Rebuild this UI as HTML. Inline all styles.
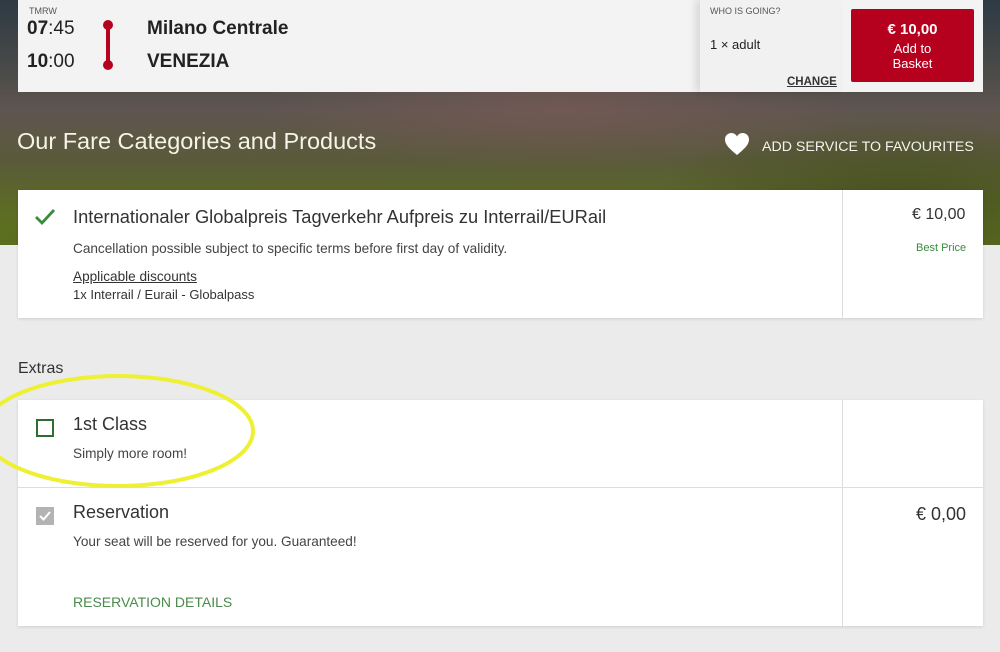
<!DOCTYPE html>
<html><head><meta charset="utf-8"><style>
*{margin:0;padding:0;box-sizing:border-box}
body{width:1000px;height:652px;overflow:hidden;background:#ebebeb;font-family:"Liberation Sans",sans-serif;position:relative;color:#333}
.hero{position:absolute;left:0;top:0;width:1000px;height:245px;background:
radial-gradient(ellipse 300px 60px at 560px 110px,rgba(120,90,85,.7),transparent),
radial-gradient(ellipse 250px 80px at 900px 200px,rgba(70,80,30,.9),transparent),
linear-gradient(180deg,#2e3a44 0px,#4a4a48 70px,#5f5550 110px,#5a5a3a 160px,#5d6e22 215px,#5c6d1f 245px)}
.a{position:absolute;white-space:nowrap}
.card{background:#f3f3f3}
</style></head><body>
<div class="hero"></div>
<div class="a card" style="left:18px;top:0;width:965px;height:92px"></div>
<div class="a" style="left:29px;top:6px;font-size:9px;color:#555">TMRW</div>
<div class="a" style="left:27px;top:18px;font-size:19px;color:#222"><b>07</b>:45</div>
<div class="a" style="left:27px;top:51px;font-size:19px;color:#222"><b>10</b>:00</div>
<div class="a" style="left:103px;top:20px;width:10px;height:10px;border-radius:50%;background:#b5001e"></div>
<div class="a" style="left:106px;top:25px;width:4px;height:38px;background:#b5001e"></div>
<div class="a" style="left:103px;top:60px;width:10px;height:10px;border-radius:50%;background:#b5001e"></div>
<div class="a" style="left:147px;top:18px;font-size:19px;font-weight:bold;color:#222">Milano Centrale</div>
<div class="a" style="left:147px;top:51px;font-size:19px;font-weight:bold;color:#222">VENEZIA</div>
<div class="a" style="left:700px;top:0;width:140px;height:92px;background:#f1f1f1;box-shadow:-4px 0 8px rgba(0,0,0,.12)"></div>
<div class="a" style="left:710px;top:6px;font-size:9px;color:#555">WHO IS GOING?</div>
<div class="a" style="left:710px;top:37px;font-size:13px;color:#222">1 × adult</div>
<div class="a" style="left:787px;top:76px;font-size:11.5px;font-weight:bold;color:#333;text-decoration:underline">CHANGE</div>
<div class="a" style="left:851px;top:9px;width:123px;height:73px;background:#b5001e;border-radius:2px;color:#fff;text-align:center">
<div style="font-size:15px;font-weight:bold;margin-top:12px">€ 10,00</div>
<div style="font-size:13px;line-height:15px;margin-top:3px">Add to<br>Basket</div></div>
<div class="a" style="left:17px;top:128px;font-size:23.5px;color:#f4f4e8">Our Fare Categories and Products</div>
<svg class="a" style="left:724px;top:132px" width="26" height="24" viewBox="0 0 26 24"><path d="M13 23 C6 17 1 13 1 7.5 C1 3.5 4 1 7.5 1 C10 1 12 2.5 13 4.5 C14 2.5 16 1 18.5 1 C22 1 25 3.5 25 7.5 C25 13 20 17 13 23Z" fill="#fff"/></svg>
<div class="a" style="left:762px;top:139px;font-size:14.2px;color:#f4f4f0">ADD SERVICE TO FAVOURITES</div>
<div class="a" style="left:18px;top:190px;width:965px;height:128px;background:#fff;box-shadow:0 1px 3px rgba(0,0,0,.12)"></div>
<div class="a" style="left:842px;top:190px;width:1px;height:128px;background:#ddd"></div>
<svg class="a" style="left:34px;top:208px" width="22" height="18"><path d="M2 9 L8 15 L20 2" stroke="#3c8a3c" stroke-width="2.8" fill="none"/></svg>
<div class="a" style="left:73px;top:206px;font-size:18.3px;color:#333">Internationaler Globalpreis Tagverkehr Aufpreis zu Interrail/EURail</div>
<div class="a" style="left:73px;top:241px;font-size:13.6px;color:#444">Cancellation possible subject to specific terms before first day of validity.</div>
<div class="a" style="left:73px;top:269px;font-size:13.6px;color:#333;text-decoration:underline">Applicable discounts</div>
<div class="a" style="left:73px;top:287px;font-size:13px;color:#333">1x Interrail / Eurail - Globalpass</div>
<div class="a" style="left:912px;top:206px;font-size:16px;color:#333">€ 10,00</div>
<div class="a" style="left:916px;top:242px;font-size:11px;color:#3c8a3c">Best Price</div>
<div class="a" style="left:18px;top:360px;font-size:16px;color:#333">Extras</div>
<div class="a" style="left:18px;top:400px;width:965px;height:226px;background:#fff;box-shadow:0 1px 3px rgba(0,0,0,.12)"></div>
<div class="a" style="left:842px;top:400px;width:1px;height:226px;background:#ddd"></div>
<div class="a" style="left:18px;top:487px;width:965px;height:1px;background:#ddd"></div>
<div class="a" style="left:36px;top:419px;width:18px;height:18px;border:2px solid #2e6e2e"></div>
<div class="a" style="left:73px;top:414px;font-size:18px;color:#333">1st Class</div>
<div class="a" style="left:73px;top:446px;font-size:13.6px;color:#444">Simply more room!</div>
<div class="a" style="left:36px;top:507px;width:18px;height:18px;background:#b3b3b3"></div>
<svg class="a" style="left:36px;top:507px" width="18" height="18"><path d="M4 9 L7.5 12.5 L14 5" stroke="#fff" stroke-width="2" fill="none"/></svg>
<div class="a" style="left:73px;top:502px;font-size:18px;color:#333">Reservation</div>
<div class="a" style="left:73px;top:534px;font-size:13.6px;color:#444">Your seat will be reserved for you. Guaranteed!</div>
<div class="a" style="left:73px;top:594px;font-size:14px;color:#4a8a4a">RESERVATION DETAILS</div>
<div class="a" style="left:916px;top:504px;font-size:18px;color:#333">€ 0,00</div>
<svg class="a" style="left:0;top:370px" width="270" height="125"><ellipse cx="118" cy="61" rx="135" ry="55" fill="none" stroke="#eef034" stroke-width="4"/></svg>
</body></html>
